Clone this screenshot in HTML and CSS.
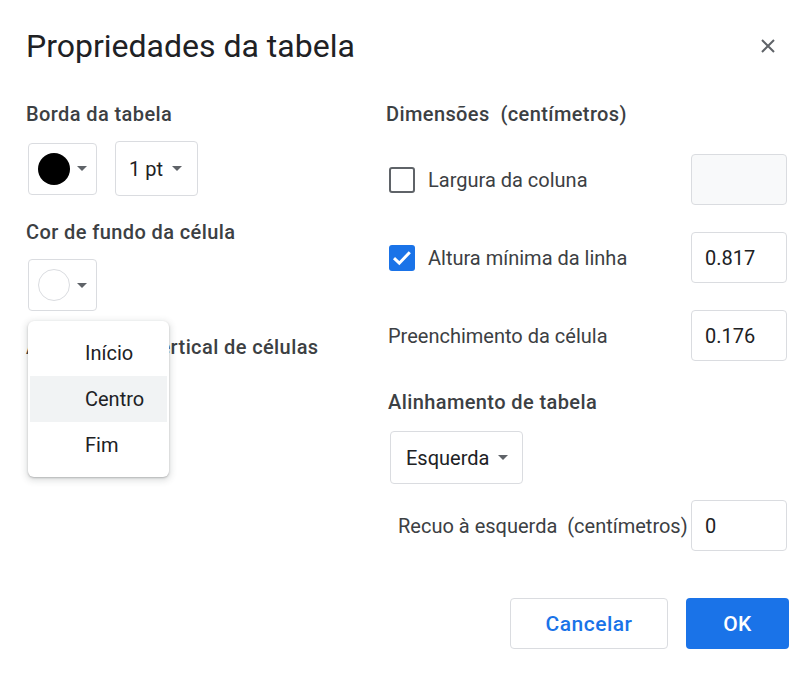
FILE: index.html
```html
<!DOCTYPE html>
<html lang="pt">
<head>
<meta charset="utf-8">
<title>Propriedades da tabela</title>
<link rel="stylesheet" href="styles.css">
</head>
<body>
<div class="dialog">
  <div class="header">
    <h1 class="title">Propriedades da tabela</h1>
    <button class="close" aria-label="Fechar">
      <svg width="14" height="14" viewBox="0 0 14 14"><path d="M1 1 L13 13 M13 1 L1 13" stroke="#5f6368" stroke-width="2" fill="none"/></svg>
    </button>
  </div>
  <div class="columns">
    <div class="col-left">
      <h2 class="section">Borda da tabela</h2>
      <div class="btn-row">
        <div class="drop color-drop"><span class="swatch black"></span><span class="arrow"></span></div>
        <div class="drop pt-drop"><span>1 pt</span><span class="arrow"></span></div>
      </div>
      <h2 class="section sec-gap">Cor de fundo da célula</h2>
      <div class="btn-row">
        <div class="drop color-drop white-drop"><span class="swatch white"></span><span class="arrow"></span></div>
      </div>
      <h2 class="section sec-gap">Alinhamento vertical de células</h2>
    </div>
    <div class="col-right">
      <h2 class="section">Dimensões&nbsp; (centímetros)</h2>
      <div class="field-row first">
        <div class="check-label"><span class="checkbox"></span><span class="label">Largura da coluna</span></div>
        <div class="input disabled"></div>
      </div>
      <div class="field-row">
        <div class="check-label"><span class="checkbox checked"><svg width="26" height="26" viewBox="0 0 26 26"><path d="M5 13.2 L10.3 18.2 L20.8 7.2" stroke="#fff" stroke-width="3" fill="none"/></svg></span><span class="label">Altura mínima da linha</span></div>
        <div class="input">0.817</div>
      </div>
      <div class="field-row">
        <span class="label plain">Preenchimento da célula</span>
        <div class="input">0.176</div>
      </div>
      <h2 class="section align-head">Alinhamento de tabela</h2>
      <div class="drop esq-drop"><span>Esquerda</span><span class="arrow"></span></div>
      <div class="field-row indent-row">
        <span class="label indent">Recuo à esquerda&nbsp; (centímetros)</span>
        <div class="input">0</div>
      </div>
    </div>
  </div>
  <div class="footer">
    <button class="btn cancel">Cancelar</button>
    <button class="btn ok">OK</button>
  </div>
  <div class="menu">
    <div class="menu-item">Início</div>
    <div class="menu-item active">Centro</div>
    <div class="menu-item">Fim</div>
  </div>
</div>
</body>
</html>
```
FILE: styles.css
```css
* { box-sizing: border-box; }
html, body { margin: 0; padding: 0; background: #fff; }
body {
  font-family: Roboto, "Liberation Sans", sans-serif;
  color: #3c4043;
  width: 812px;
  height: 679px;
  overflow: hidden;
}
.dialog {
  position: relative;
  padding: 28px 25px 0 26px;
}
.header {
  display: flex;
  justify-content: space-between;
  align-items: center;
  height: 36px;
}
.title {
  margin: 0;
  font-size: 32px;
  line-height: 36px;
  font-weight: 400;
  color: #202124;
}
.close {
  border: 0;
  background: none;
  padding: 0;
  width: 14px;
  height: 14px;
  margin-right: 12px;
  display: flex;
}
.columns {
  display: grid;
  grid-template-columns: 360px 401px;
  margin-top: 38px;
}
.section {
  margin: 0;
  font-size: 20px;
  line-height: 24px;
  font-weight: 500;
  letter-spacing: 0.4px;
  color: #3c4043;
}
.sec-gap { margin-top: 24px; }
.btn-row {
  display: flex;
  align-items: center;
  gap: 18px;
  margin-top: 15px;
  margin-left: 2px;
}
.drop {
  display: flex;
  align-items: center;
  border: 1px solid #dadce0;
  border-radius: 4px;
  background: #fff;
  font-size: 20px;
  color: #202124;
}
.color-drop {
  width: 69px;
  height: 52px;
  padding-left: 9px;
  gap: 7px;
}
.pt-drop {
  width: 83px;
  height: 55px;
  padding-left: 13px;
  gap: 9px;
}
.swatch {
  width: 32px;
  height: 32px;
  border-radius: 50%;
  display: block;
}
.swatch.black { background: #000; }
.swatch.white { background: #fff; border: 1px solid #dadce0; }
.arrow {
  width: 0;
  height: 0;
  border-left: 5px solid transparent;
  border-right: 5px solid transparent;
  border-top: 5px solid #5f6368;
  display: block;
}
.field-row {
  display: flex;
  align-items: center;
  justify-content: space-between;
  margin-top: 27px;
}
.field-row.first { margin-top: 28px; }
.check-label {
  display: flex;
  align-items: center;
  gap: 13px;
  margin-left: 3px;
}
.checkbox {
  width: 26px;
  height: 26px;
  border: 2px solid #5f6368;
  border-radius: 3px;
  display: flex;
}
.checkbox.checked {
  background: #1a73e8;
  border: 0;
}
.label {
  font-size: 20px;
  line-height: 24px;
  color: #3c4043;
}
.label.plain { margin-left: 2px; }
.label.indent { margin-left: 12px; }
.input {
  width: 96px;
  height: 51px;
  border: 1px solid #dadce0;
  border-radius: 4px;
  padding-left: 13px;
  display: flex;
  align-items: center;
  font-size: 20px;
  color: #202124;
}
.input.disabled { background: #f8f9fa; }
.align-head { margin-top: 29px; margin-left: 2px; }
.esq-drop {
  width: 133px;
  height: 53px;
  margin-top: 17px;
  margin-left: 4px;
  padding-left: 15px;
  gap: 9px;
}
.indent-row { margin-top: 16px; }
.footer {
  display: flex;
  justify-content: flex-end;
  gap: 18px;
  margin-top: 47px;
  margin-right: -2px;
}
.btn {
  height: 51px;
  border-radius: 4px;
  font-family: Roboto, "Liberation Sans", sans-serif;
  font-size: 21px;
  font-weight: 500;
  letter-spacing: 0.5px;
  cursor: pointer;
}
.cancel {
  width: 158px;
  border: 1px solid #dadce0;
  background: #fff;
  color: #1a73e8;
}
.ok {
  width: 103px;
  border: 0;
  background: #1a73e8;
  color: #fff;
}
.menu {
  position: absolute;
  left: 28px;
  top: 321px;
  width: 141px;
  padding: 9px 2px 9px 2px;
  background: #fff;
  border-radius: 6px;
  box-shadow: 0 2px 6px 2px rgba(60,64,67,0.15), 0 1px 2px rgba(60,64,67,0.3);
}
.menu-item {
  height: 46px;
  line-height: 46px;
  padding-left: 55px;
  font-size: 20px;
  color: #202124;
}
.menu-item.active { background: #f1f3f4; }
```
